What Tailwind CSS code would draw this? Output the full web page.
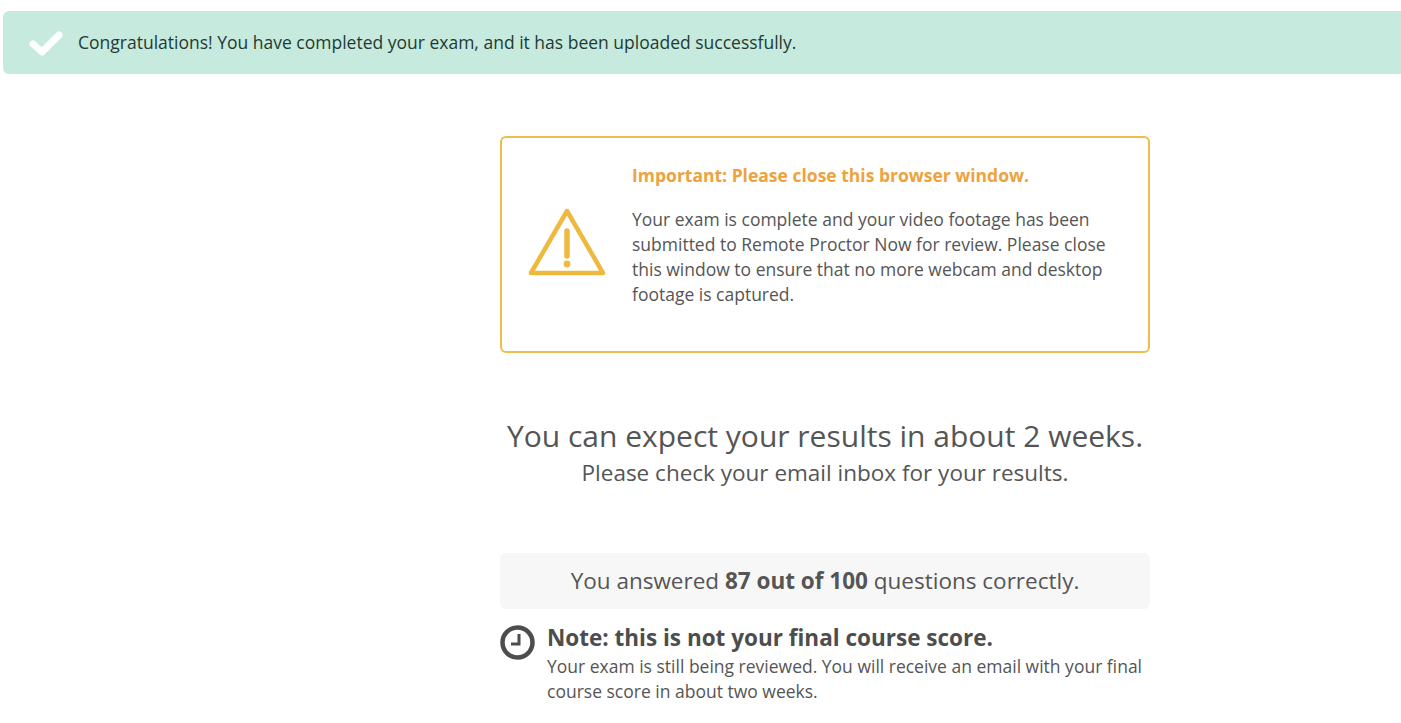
<!DOCTYPE html>
<html lang="en">
<head>
  <meta charset="UTF-8">
  <title>Exam complete</title>
  <script src="https://cdn.jsdelivr.net/npm/@tailwindcss/browser@4"></script>
</head>
<body class="bg-white overflow-hidden font-['Open_Sans',sans-serif] text-[#555555]">
  <!-- Success banner -->
  <div class="mt-[11px] ml-[3px] h-[63px] bg-[#c6eadd] rounded-l-md flex items-center pl-[26px] text-[#1f3b33] text-[17.5px]">
    <svg class="w-[34px] h-[26px] shrink-0" viewBox="0 0 34 26" fill="none">
      <path d="M4 14 L13 22 L30 5" stroke="#fff" stroke-width="7" stroke-linecap="round" stroke-linejoin="round"/>
    </svg>
    <span class="ml-[15px] -mt-[1px]">Congratulations! You have completed your exam, and it has been uploaded successfully.</span>
  </div>

  <main class="w-[650px] ml-[500px]">
    <!-- Warning box -->
    <div class="mt-[62px] h-[217px] border-2 border-[#efbc4d] rounded-md flex items-center">
      <svg class="w-[80px] h-[70px] ml-[25px] mb-[5px] shrink-0" viewBox="0 0 80 70" fill="none">
        <path d="M40 4 L76 66 H4 Z" stroke="#efb83f" stroke-width="4.5" stroke-linejoin="round"/>
        <path d="M40 24 V49" stroke="#efb83f" stroke-width="5.5" stroke-linecap="round"/>
        <circle cx="40" cy="57" r="3.4" fill="#efb83f"/>
      </svg>
      <div class="ml-[25px] w-[490px] pb-[20px]">
        <p class="text-[#efa23c] font-bold text-[17.5px] leading-[25px]">Important: Please close this browser window.</p>
        <p class="mt-[19px] text-[17.5px] leading-[25px]">Your exam is complete and your video footage has been submitted to Remote Proctor Now for review. Please close this window to ensure that no more webcam and desktop footage is captured.</p>
      </div>
    </div>

    <!-- Results message -->
    <div class="mt-[63px] text-center">
      <p class="text-[30px] leading-[40px]">You can expect your results in about 2 weeks.</p>
      <p class="mt-[2px] text-[22.5px] leading-[30px]">Please check your email inbox for your results.</p>
    </div>

    <!-- Score -->
    <div class="mt-[65px] h-[56px] bg-[#f7f7f8] rounded-md flex items-center justify-center text-[22.5px]">
      <span class="-mt-[1px]">You answered <strong class="font-bold">87 out of 100</strong> questions correctly.</span>
    </div>

    <!-- Note -->
    <div class="mt-[15px] flex">
      <svg class="w-[35px] h-[35px] shrink-0 mt-[1px]" viewBox="0 0 35 35" fill="none">
        <circle cx="17.5" cy="17.5" r="15" stroke="#4d4d4d" stroke-width="4.5"/>
        <path d="M19 9 V19 H11" stroke="#4d4d4d" stroke-width="3"/>
      </svg>
      <div class="ml-[12px]">
        <p class="font-bold text-[22.5px] leading-[28px] text-[#4d4d4d]">Note: this is not your final course score.</p>
        <p class="mt-[2px] text-[17.5px] leading-[25px]">Your exam is still being reviewed. You will receive an email with your final course score in about two weeks.</p>
      </div>
    </div>
  </main>
</body>
</html>
